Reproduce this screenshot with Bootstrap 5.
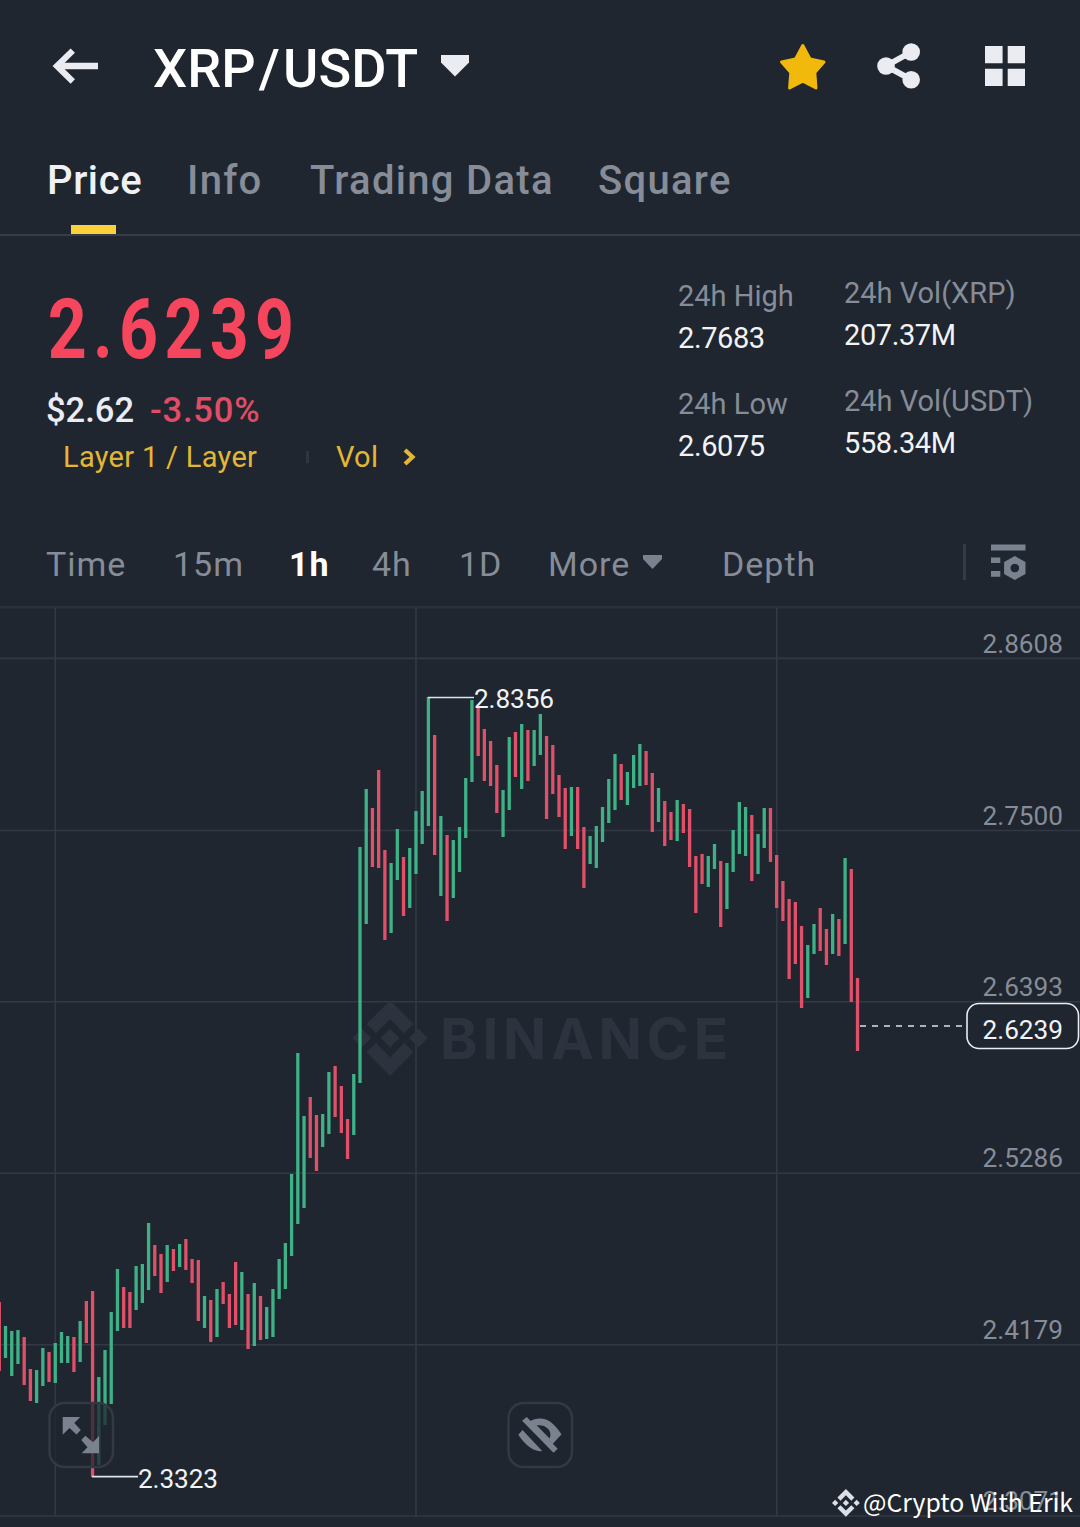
<!DOCTYPE html>
<html lang="en">
<head>
<meta charset="utf-8">
<meta name="viewport" content="width=device-width, initial-scale=1">
<title>XRP/USDT</title>
<link href="https://cdn.jsdelivr.net/npm/bootstrap@5.3.0/dist/css/bootstrap.min.css" rel="stylesheet">
<style>
  body { background: #1f262f; color: #eaecf2; font-family: Roboto, "Noto Sans", sans-serif; width: 1080px; height: 1527px; overflow: hidden; }
  svg { display: block; flex: none; }
  .tone-dim { color: #868c98; }
  .tone-red { color: #f6465d; }
  .tone-rose { color: #e04d66; }
  .tone-gold { color: #e3b736; }
  .app-bar { height: 132px; padding: 0 54px 0 52px; }
  .pair-name { font-size: 54px; font-weight: 500; line-height: 60px; color: #fff; margin-left: 54px; padding-top: 6px; width: 288px; letter-spacing: .1px; white-space: nowrap; }
  .pair-slash { margin: 0 3px; }
  .page-tabs { height: 104px; border-bottom: 2px solid #363d48; padding-left: 47px; display: grid; grid-template-columns: 140px 123px 288px 200px; line-height: 98px; font-size: 40px; font-weight: 500; letter-spacing: 1.3px; white-space: nowrap; }
  .tab-on { color: #f0f1f5; position: relative; letter-spacing: .6px; }
  .tab-on::after { content: ""; position: absolute; left: 24px; bottom: 0; width: 45px; height: 9px; background: #fad03b; }
  .ticker { height: 288px; padding-left: 47px; }
  .last-block { width: 631px; padding-top: 54px; }
  .last-price { font-size: 83px; font-weight: 700; line-height: 80px; letter-spacing: 7.6px; transform: scaleX(.82); transform-origin: left; padding-left: 1px; white-space: nowrap; }
  .fiat-row { font-size: 34.5px; font-weight: 500; line-height: 48px; margin-top: 16px; }
  .fiat-price { width: 104px; margin-left: -1px; }
  .fiat-change { letter-spacing: .8px; }
  .tag-row { font-size: 29px; line-height: 42px; margin-top: 2px; padding-left: 16px; letter-spacing: .3px; }
  .tag-name { width: 243px; }
  .tag-rule { width: 3px; height: 12px; background: #2f3641; }
  .tag-vol { width: 67px; margin-left: 27px; }
  .stat-col { font-size: 29px; line-height: 42px; width: 166px; padding-top: 39px; white-space: nowrap; }
  .stat-col + .stat-col { padding-top: 36px; width: 200px; }
  .stat-value { color: #f2f3f7; margin-bottom: 24px; letter-spacing: -.4px; }
  .frames { height: 82px; padding: 0 0 1px 46px; font-size: 34px; letter-spacing: 1px; white-space: nowrap; }
  .frames > span { flex: none; }
  .frames > svg, .frames > .frame-rule { margin-bottom: 6px; }
  .frame-rule { width: 3px; height: 36px; background: #343b46; }
</style>
<script src="https://cdn.jsdelivr.net/npm/bootstrap@5.3.0/dist/js/bootstrap.bundle.min.js"></script>
</head>
<body class="m-0 d-flex flex-column">
<header class="app-bar d-flex align-items-center">
  <svg width="47" height="40" viewBox="52 46 47 40" fill="none" stroke="#eaecf2"><path d="M72.8 50.6 57 66l15.800 15.500" stroke-width="6.2"/><path d="M58 66h40" stroke-width="6.4"/></svg>
  <div class="pair-name">XRP<span class="pair-slash">/</span>USDT</div>
  <svg width="28" height="22" viewBox="0 0 28 22"><path d="M0 0h28v7.5L14 21.5 0 7.5z" fill="#eaecf2"/></svg>
  <div class="d-flex align-items-center ms-auto">
    <svg width="46" height="48" viewBox="780 42 46 48"><path d="M802.8 45.500 810 59 824 61.900 814.800 72.400 816 88 802.800 81.200 789.600 88 790.800 72.400 781.600 61.900 795.600 59z" fill="#f0b90b" stroke="#f0b90b" stroke-width="3" stroke-linejoin="round"/></svg>
    <svg class="ms-5" width="48" height="48" viewBox="874 42 48 48" fill="#eaecf2"><path d="M911.200 52 886 66l25.200 13.700" fill="none" stroke="#eaecf2" stroke-width="6"/><circle cx="886" cy="66" r="8.800"/><circle cx="911.200" cy="52" r="8.800"/><circle cx="911.200" cy="79.700" r="8.800"/></svg>
    <svg style="margin-left:63px" width="41" height="40" viewBox="985 46 41 40" fill="#eaecf2"><path d="M985 46h17.600v17.300H985zM1007.700 46h17.300v17.300h-17.300zM985 68.700h17.600V86H985zM1007.700 68.700h17.300V86h-17.300z"/></svg>
  </div>
</header>

<nav class="page-tabs tone-dim">
  <div class="tab-on">Price</div><div>Info</div><div>Trading Data</div><div>Square</div>
</nav>

<section class="ticker d-flex">
  <div class="last-block">
    <div class="last-price tone-red">2.6239</div>
    <div class="fiat-row d-flex"><span class="fiat-price">$2.62</span><span class="fiat-change tone-rose">-3.50%</span></div>
    <div class="tag-row d-flex align-items-center tone-gold">
      <span class="tag-name">Layer 1 / Layer</span><span class="tag-rule"></span><span class="tag-vol">Vol</span>
      <svg width="13" height="18" viewBox="0 0 13 18"><path d="M2 2l7.500 7L2 16" fill="none" stroke="#e3b736" stroke-width="4.200"/></svg>
    </div>
  </div>
  <div class="stat-col"><div class="tone-dim">24h High</div><div class="stat-value">2.7683</div><div class="tone-dim">24h Low</div><div class="stat-value">2.6075</div></div>
  <div class="stat-col"><div class="tone-dim">24h Vol(XRP)</div><div class="stat-value">207.37M</div><div class="tone-dim">24h Vol(USDT)</div><div class="stat-value">558.34M</div></div>
</section>

<div class="frames d-flex align-items-center tone-dim">
  <span style="width:127px">Time</span><span style="width:116px">15m</span><span style="width:83px" class="text-white fw-bold">1h</span><span style="width:87px">4h</span><span style="width:89px">1D</span><span style="width:95px">More</span>
  <svg width="19" height="14" viewBox="0 0 19 14"><path d="M0 0h19v4L9.500 14 0 4z" fill="#7a8290"/></svg>
  <span style="width:241px;margin-left:60px">Depth</span>
  <span class="frame-rule"></span>
  <svg style="margin-left:23px" width="37" height="38" viewBox="989 543 37 38" fill="#7a8290"><path d="M991 544.500h34.500v6H991zM991 557.500h9.300v5.500H991zM991 571h9.300v5.700H991z"/><path fill-rule="evenodd" d="M1014.800 556l10.700 6v12l-10.700 6-10.700-6v-12zM1014.800 563.700a4.300 4.300 0 1 0 .01 0z"/></svg>
</div>

<svg width="1080" height="921" viewBox="0 606 1080 921" font-family="Roboto, sans-serif">
  <defs><path id="bnb" d="M16.624 13.9202l2.7175 2.7154-7.353 7.353-7.353-7.352 2.7175-2.7164 4.6355 4.6595 4.6356-4.6595zm4.6366-4.6366L24 12l-2.7154 2.7164L18.5682 12l2.6924-2.7164zm-9.272.001l2.7163 2.6914-2.7164 2.7174v-.001L9.2721 12l2.7164-2.7154zm-9.2722-.001L5.4088 12l-2.6914 2.6924L0 12l2.7164-2.7164zM11.9885.0115l7.353 7.329-2.7174 2.7154-4.6356-4.6356-4.6355 4.6595-2.7174-2.7154 7.353-7.353z"/></defs>
  <path d="M0 607.300H1080" stroke="#2a313c" stroke-width="2.600"/>
  <path d="M55.300 608V1516M416 608V1516M776.800 608V1516M0 658.400H1080M0 830.500H1080M0 1001.800H1080M0 1173.300H1080M0 1344.700H1080M0 1516H1080" stroke="#333944" stroke-width="1.600"/>
  <g fill="#2c333e">
    <use href="#bnb" transform="translate(353.500 1001.500) scale(3.050)" stroke="#2c333e" stroke-width=".500"/>
    <text x="440" y="1059" font-family="Inter" font-weight="700" font-size="57" textLength="288" lengthAdjust="spacing">BINANCE</text>
  </g>
  <g id="candles" stroke-width="3.300" stroke-linecap="butt"></g>
  <g fill="#868c98" font-size="26.200">
    <text x="982.500" y="652.700" textLength="80.500">2.8608</text>
    <text x="982.500" y="824.700" textLength="80.500">2.7500</text>
    <text x="982.500" y="996" textLength="80.500">2.6393</text>
    <text x="982.500" y="1167.300" textLength="80.500">2.5286</text>
    <text x="982.500" y="1339" textLength="80.500">2.4179</text>
    <text x="982.500" y="1509.500" textLength="80.500">2.3071</text>
  </g>
  <g fill="#f2f3f7" font-size="26.200">
    <path d="M428 697.500H474M92 1476.700H138" stroke="#dfe2e8" stroke-width="1.700"/>
    <text x="474" y="708" textLength="80">2.8356</text>
    <text x="138" y="1487.700" textLength="80">2.3323</text>
    <path d="M860 1026H962" stroke="#dfe2e8" stroke-width="1.700" stroke-dasharray="6 6"/>
    <rect x="967" y="1003.500" width="111.500" height="45" rx="12" fill="#1f262f" stroke="#eaecf2" stroke-width="1.600"/>
    <text x="982.500" y="1038.700" textLength="80.500">2.6239</text>
  </g>
  <g fill="#1f262f" fill-opacity=".75" stroke="#323944" stroke-width="2.600">
    <rect x="49.500" y="1403" width="63.500" height="64" rx="15"/>
    <rect x="508.500" y="1403" width="63.500" height="64" rx="15"/>
  </g>
  <g fill="#7a8290">
    <path d="M62.700 1417H80.300L74.300 1423 80.800 1430 76.500 1434.500 69.500 1428 62.700 1434.700zM99 1453.300H81.700L87.500 1447.300 81.300 1440 85.300 1435.700 93 1442.300 99 1436z"/>
    <path d="M522.100 1420.700 526.700 1417 557.700 1448.700 553.500 1452.700z"/>
    <path fill-rule="evenodd" d="M529.500 1421.500C536 1417.500 544 1417.500 550 1421.500Q556 1426 561.500 1434.300L552.700 1444zM536.600 1425.300L549.600 1438.500C553 1431 546 1424 536.600 1425.300z"/>
    <path d="M518.300 1434.700 522.500 1430 542.400 1451.200Q530 1452 518.300 1434.700z"/>
  </g>
  <use href="#bnb" transform="translate(832 1489) scale(1.160)" fill="#dcdfe6"/>
  <text x="863" y="1512" font-family="'Noto Sans CJK SC', sans-serif" font-size="24.500" fill="#fff" textLength="210" lengthAdjust="spacingAndGlyphs">@Crypto With Erik</text>
</svg>

<script>
  // One candle per token: colour, top and bottom of the high-low range, in pixels.
  const series = `r1302-1371 g1326-1358 g1331-1376 g1330-1364 r1337-1385 r1369-1401 g1370-1403 g1348-1386 r1352-1382 g1343-1383
 g1332-1363 g1336-1363 r1337-1372 g1321-1362 r1301-1343 r1291-1477 g1377-1465 g1350-1425 g1312-1404 g1269-1331 r1287-1328 r1292-1328
 g1266-1310 g1264-1303 g1223-1290 r1245-1276 r1254-1293 g1245-1282 r1249-1271 g1244-1267 r1239-1270 r1259-1283 r1260-1321 g1296-1328
 r1300-1342 g1289-1337 r1282-1304 r1294-1328 r1262-1325 g1272-1330 r1294-1349 g1283-1346 r1296-1340 g1307-1339 g1289-1337 g1259-1299
 g1243-1289 g1174-1256 g1053-1224 g1116-1208 r1097-1158 r1115-1171 g1114-1147 g1072-1134 r1066-1117 r1086-1133 r1119-1159 g1074-1135
 g847-1083 g789-924 r808-867 r770-868 r850-940 g863-933 g829-880 r857-916 g848-908 g811-874 g791-844 g697-826 r735-855 g816-896
 r835-921 g840-898 g827-872 g778-838 g700-782 r708-756 r729-781 r741-786 r765-813 g790-837 g737-810 r732-777 g724-789 r730-781
 g730-766 g714-755 r736-819 r745-794 r775-817 r788-849 g787-836 r787-849 r827-888 g836-864 g826-868 g807-842 g779-823 g754-810
 r764-800 g772-805 g755-788 g744-786 r751-785 r773-832 g788-822 r801-846 r812-840 g800-841 r804-833 r809-867 r856-913 r854-884
 g856-887 g844-869 r861-927 g863-909 g830-872 g802-854 g807-856 r815-881 g834-874 g808-848 r808-862 r855-908 r881-921 r899-979
 r902-964 r926-1008 g945-998 g924-954 r908-951 r929-965 g914-954 r919-956 g858-944 r869-1002 r978-1051`;
  document.getElementById('candles').innerHTML = series.trim().split(/\s+/).map((c, i) => {
    const [hi, lo] = c.slice(1).split('-');
    const x = (-0.7 + 6.219 * i).toFixed(2);
    return `<path d="M${x} ${hi}V${lo}" stroke="${c[0] === 'g' ? '#3fb186' : '#e05068'}"/>`;
  }).join('');
</script>
</body>
</html>
